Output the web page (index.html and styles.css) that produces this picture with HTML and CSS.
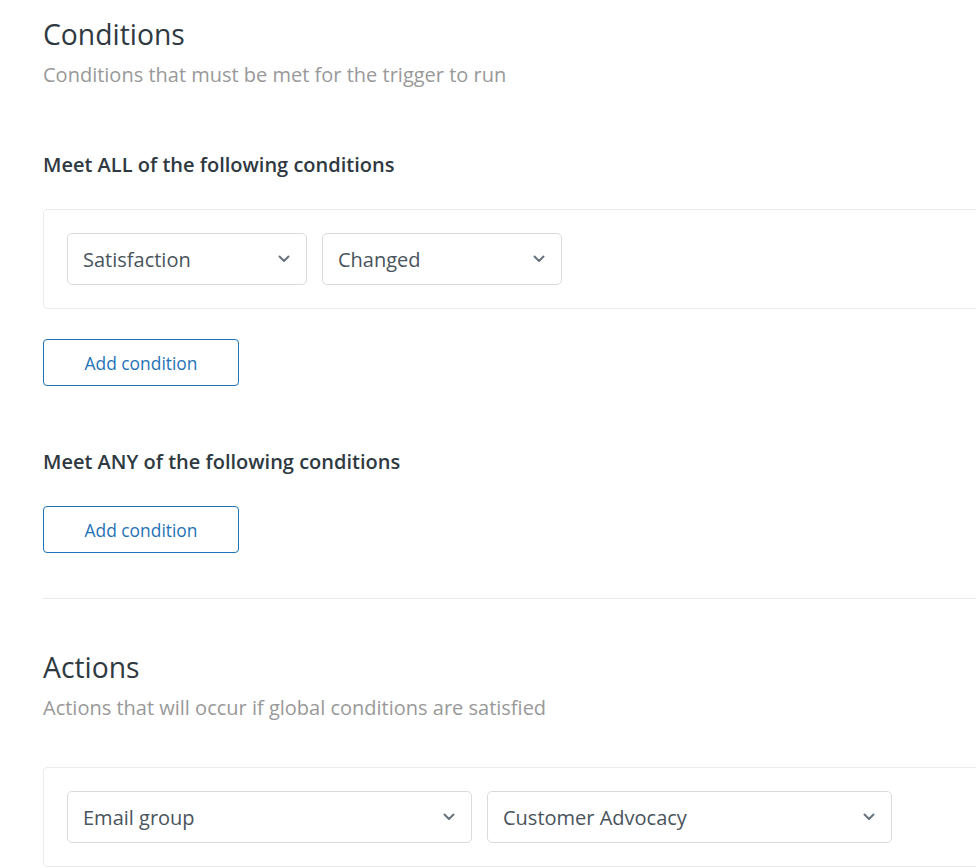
FILE: index.html
```html
<!DOCTYPE html>
<html lang="en">

<head>
    <meta charset="UTF-8">
    <meta name="viewport" content="width=device-width, initial-scale=1.0">
    <title>Trigger conditions</title>
    <link rel="stylesheet" href="styles.css">
</head>

<body>
    <div class="page">
        <section class="section">
            <h2 class="section-title">Conditions</h2>
            <p class="section-hint">Conditions that must be met for the trigger to run</p>

            <h3 class="group-label">Meet ALL of the following conditions</h3>
            <div class="rule-card">
                <div class="select small">
                    <span>Satisfaction</span>
                    <svg class="chevron" width="12" height="8" viewBox="0 0 12 8"><path d="M1.5 1.5 6 6l4.5-4.5" /></svg>
                </div>
                <div class="select small">
                    <span>Changed</span>
                    <svg class="chevron" width="12" height="8" viewBox="0 0 12 8"><path d="M1.5 1.5 6 6l4.5-4.5" /></svg>
                </div>
            </div>
            <button class="add-btn">Add condition</button>

            <h3 class="group-label">Meet ANY of the following conditions</h3>
            <button class="add-btn first">Add condition</button>
        </section>

        <hr class="divider">

        <section class="section actions">
            <h2 class="section-title">Actions</h2>
            <p class="section-hint">Actions that will occur if global conditions are satisfied</p>

            <div class="rule-card">
                <div class="select wide">
                    <span>Email group</span>
                    <svg class="chevron" width="12" height="8" viewBox="0 0 12 8"><path d="M1.5 1.5 6 6l4.5-4.5" /></svg>
                </div>
                <div class="select wide">
                    <span>Customer Advocacy</span>
                    <svg class="chevron" width="12" height="8" viewBox="0 0 12 8"><path d="M1.5 1.5 6 6l4.5-4.5" /></svg>
                </div>
            </div>
        </section>
    </div>
</body>

</html>
```

FILE: styles.css
```css
body {
    margin: 0;
    font-family: 'Open Sans', 'Noto Sans', sans-serif;
    background: #fff;
    color: #2f3941;
    overflow: hidden;
}

.page {
    width: 1100px;
    padding: 16px 0 0 43px;
}

.section-title {
    font-size: 28.3px;
    line-height: 36px;
    font-weight: 400;
    margin: 0;
    color: #2f3941;
}

.section-hint {
    font-size: 20px;
    line-height: 28px;
    margin: 9px 0 0;
    color: #999;
}

.group-label {
    font-size: 20px;
    line-height: 28px;
    font-weight: 600;
    margin: 62px 0 0;
    color: #2f3941;
}

.rule-card {
    margin-top: 30px;
    border: 1px solid #e9ebed;
    border-radius: 4px;
    padding: 23px;
    display: flex;
    gap: 15px;
}

.actions .rule-card {
    margin-top: 45px;
}

.select {
    box-sizing: border-box;
    height: 52px;
    border: 1px solid #d8dcde;
    border-radius: 5px;
    display: flex;
    align-items: center;
    justify-content: space-between;
    padding: 0 16px 0 15px;
    font-size: 20px;
    color: #49545c;
}

.select.small {
    width: 240px;
}

.select.wide {
    width: 405px;
}

.chevron path {
    fill: none;
    stroke: #68737d;
    stroke-width: 2;
    stroke-linecap: round;
    stroke-linejoin: round;
}

.add-btn {
    display: block;
    box-sizing: border-box;
    width: 196px;
    height: 47px;
    margin-top: 30px;
    background: #fff;
    border: 1px solid #1f73b7;
    border-radius: 4px;
    color: #1f73b7;
    font-family: inherit;
    font-size: 17.4px;
}

.divider {
    border: 0;
    border-top: 1px solid #e9ebed;
    margin: 45px 0 0;
}

.actions .section-title {
    margin-top: 50px;
}
```
